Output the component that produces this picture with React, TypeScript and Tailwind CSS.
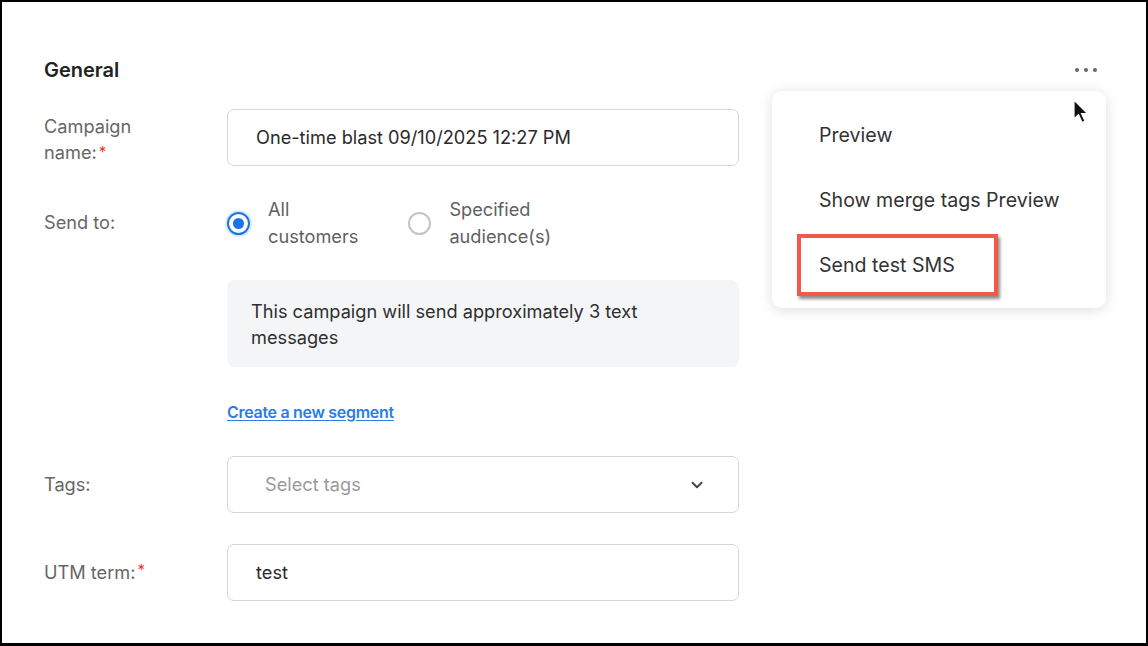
import React from "react";
import { ChevronDown } from "lucide-react";

const Req = () => <span className="text-[#e5392f] text-[15px] align-top ml-[2px]">*</span>;

const Radio = ({ checked, label }: { checked?: boolean; label: React.ReactNode }) => (
  <label className="flex items-center gap-[18px]">
    {checked ? (
      <span className="flex items-center justify-center w-[23px] h-[23px] rounded-full border-2 border-[#1a73e8] shadow-[0_0_0_2px_rgba(26,115,232,0.15)]">
        <span className="w-[11px] h-[11px] rounded-full bg-[#1a73e8]"></span>
      </span>
    ) : (
      <span className="w-[23px] h-[23px] rounded-full border-2 border-[#c4c4c4]"></span>
    )}
    <span className="leading-[27px] text-[#5f5f5f]">{label}</span>
  </label>
);

export default function App() {
  return (
    <div
      className="relative w-[1148px] h-[646px] border-2 border-b-[3px] border-black bg-white overflow-hidden"
      style={{ fontFamily: "Inter, Roboto, sans-serif" }}
    >
      <div className="pl-[42px] pt-[56px] text-[18.2px]">
        {/* header */}
        <div className="flex items-center justify-between h-6 pr-[49px]">
          <h2 className="font-semibold text-[20px] text-[#222]">General</h2>
          <div className="flex gap-[5px]">
            <span className="w-[4px] h-[4px] rounded-full bg-[#666]"></span>
            <span className="w-[4px] h-[4px] rounded-full bg-[#666]"></span>
            <span className="w-[4px] h-[4px] rounded-full bg-[#666]"></span>
          </div>
        </div>

        {/* campaign name */}
        <div className="flex mt-[27px]">
          <div className="w-[183px] pt-[4px] leading-[26px] text-[#666]">
            Campaign
            <br />
            name:<Req />
          </div>
          <div className="w-[512px] h-[57px] flex items-center pl-[28px] border border-[#d6d6d6] rounded-[7px] text-[#2a2a2a]">
            One-time blast 09/10/2025 12:27 PM
          </div>
        </div>

        {/* send to */}
        <div className="flex items-center mt-[30px]">
          <div className="w-[183px] text-[#666]">Send to:</div>
          <div className="flex items-center gap-[50px]">
            <Radio checked label={<>All<br />customers</>} />
            <Radio label={<>Specified<br />audience(s)</>} />
          </div>
        </div>

        <div className="ml-[183px] mt-[30px] w-[512px] h-[87px] rounded-[8px] bg-[#f4f5f6] pl-[24px] pt-[18px] leading-[26px] text-[#2f2f2f]">
          This campaign will send approximately 3 text
          <br />
          messages
        </div>

        <div className="ml-[183px] mt-[34px] leading-5">
          <a href="#" className="text-[16px] font-semibold text-[#2b7de1] underline underline-offset-2 tracking-[-0.3px]">
            Create a new segment
          </a>
        </div>

        {/* tags */}
        <div className="flex items-center mt-[34px]">
          <div className="w-[183px] text-[#666]">Tags:</div>
          <div className="w-[512px] h-[57px] flex items-center justify-between pl-[37px] pr-[32px] border border-[#d6d6d6] rounded-[7px]">
            <span className="text-[#9a9a9a]">Select tags</span>
            <ChevronDown size={18} strokeWidth={2.5} className="text-[#444]" />
          </div>
        </div>

        {/* utm */}
        <div className="flex items-center mt-[31px]">
          <div className="w-[183px] text-[#666]">
            UTM term:<Req />
          </div>
          <div className="w-[512px] h-[57px] flex items-center pl-[28px] border border-[#d6d6d6] rounded-[7px] text-[#2a2a2a]">
            test
          </div>
        </div>
      </div>

      {/* dropdown menu */}
      <div className="absolute left-[770px] top-[89px] w-[334px] h-[217px] bg-white rounded-[10px] shadow-[0_2px_14px_rgba(0,0,0,0.13)] pt-[12px] text-[19.6px] text-[#333]">
        <div className="h-[65px] flex items-center pl-[47px]">Preview</div>
        <div className="h-[65px] flex items-center pl-[47px]">Show merge tags Preview</div>
        <div className="relative h-[65px] flex items-center pl-[47px]">
          <span className="relative z-10">Send test SMS</span>
          <div className="absolute left-[25px] top-[1px] w-[201px] h-[62px] border-4 border-[#f3594b] shadow-[2px_3px_3px_rgba(0,0,0,0.45)]"></div>
        </div>
      </div>

      {/* cursor */}
      <svg className="absolute left-[1070px] top-[97px]" width="18" height="26" viewBox="0 0 18 26">
        <path d="M2 1 L2 20 L6.5 15.5 L10 23.5 L13 22 L9.5 14.5 L15.5 14.5 Z" fill="#111" stroke="#fff" strokeWidth="1.2" />
      </svg>
    </div>
  );
}
